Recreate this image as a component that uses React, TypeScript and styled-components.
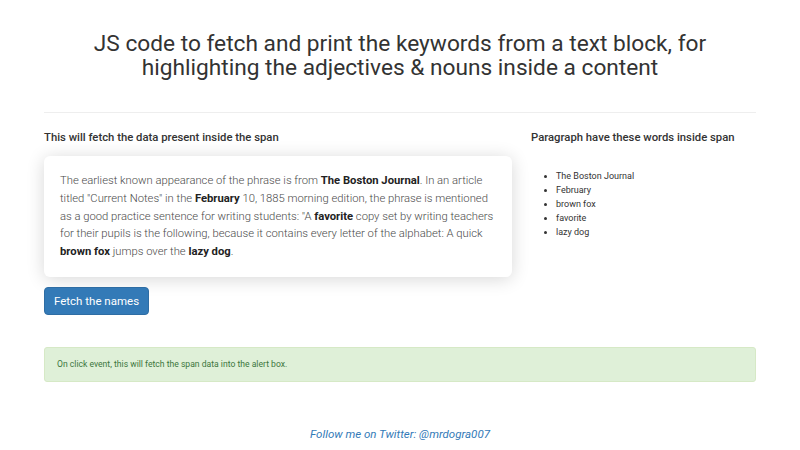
import React from "react";
import styled, { createGlobalStyle } from "styled-components";

const GlobalStyle = createGlobalStyle`
  html, body {
    margin: 0;
    padding: 0;
    background: #fff;
    font-family: Roboto, "Liberation Sans", sans-serif;
    color: #333;
  }
`;

const Page = styled.div`
  width: 712px;
  margin: 0 auto;
  padding-top: 32px;
`;

const Title = styled.h1`
  margin: 0;
  padding: 0 20px;
  text-align: center;
  font-size: 22.7px;
  line-height: 24px;
  font-weight: 400;
  color: #333;
`;

const Divider = styled.hr`
  margin: 32px 0 0;
  border: 0;
  border-top: 1px solid #eee;
`;

const Row = styled.div`
  display: flex;
  gap: 19px;
  margin-top: 17px;
`;

const MainCol = styled.div`
  width: 468px;
`;

const SideCol = styled.div`
  flex: 1;
`;

const Heading = styled.h4`
  margin: 0;
  font-size: 11.3px;
  line-height: 16px;
  font-weight: 500;
  color: #333;
`;

const Card = styled.div`
  margin-top: 10px;
  padding: 16px;
  background: #fff;
  border-radius: 6px;
  box-shadow: 0 2px 18px rgba(0, 0, 0, 0.16);
  font-size: 11.25px;
  line-height: 17.8px;
  font-weight: 300;
  color: #4a4a4a;

  b {
    font-weight: 700;
    color: #222;
  }
`;

const Button = styled.button`
  display: block;
  margin-top: 10px;
  padding: 0 9px;
  height: 28px;
  background: #337ab7;
  border: 1px solid #2e6da4;
  border-radius: 4px;
  color: #fff;
  font-family: Roboto, "Liberation Sans", sans-serif;
  font-size: 11.5px;
  cursor: pointer;
`;

const WordList = styled.ul`
  margin: 23px 0 0;
  padding-left: 25px;
  font-size: 9px;
  line-height: 14px;
  color: #333;
`;

const Alert = styled.div`
  margin-top: 32px;
  padding: 10px 12px;
  background: #dff0d8;
  border: 1px solid #d6e9c6;
  border-radius: 3px;
  color: #3c763d;
  font-size: 8.6px;
  line-height: 13px;
`;

const Footer = styled.p`
  margin: 45px 0 0;
  text-align: center;
  font-size: 11.5px;
  font-style: italic;

  a {
    color: #337ab7;
    text-decoration: none;
  }
`;

const words = ["The Boston Journal", "February", "brown fox", "favorite", "lazy dog"];

export default function App() {
  return (
    <>
      <GlobalStyle />
      <Page>
        <Title>
          JS code to fetch and print the keywords from a text block, for highlighting the
          adjectives &amp; nouns inside a content
        </Title>
        <Divider />
        <Row>
          <MainCol>
            <Heading>This will fetch the data present inside the span</Heading>
            <Card>
              The earliest known appearance of the phrase is from <b>The Boston Journal</b>. In
              an article titled "Current Notes" in the <b>February</b> 10, 1885 morning edition,
              the phrase is mentioned as a good practice sentence for writing students: "A{" "}
              <b>favorite</b> copy set by writing teachers for their pupils is the following,
              because it contains every letter of the alphabet: A quick <b>brown fox</b> jumps
              over the <b>lazy dog</b>.
            </Card>
            <Button>Fetch the names</Button>
          </MainCol>
          <SideCol>
            <Heading>Paragraph have these words inside span</Heading>
            <WordList>
              {words.map((w) => (
                <li key={w}>{w}</li>
              ))}
            </WordList>
          </SideCol>
        </Row>
        <Alert>On click event, this will fetch the span data into the alert box.</Alert>
        <Footer>
          <a href="#">Follow me on Twitter: @mrdogra007</a>
        </Footer>
      </Page>
    </>
  );
}
